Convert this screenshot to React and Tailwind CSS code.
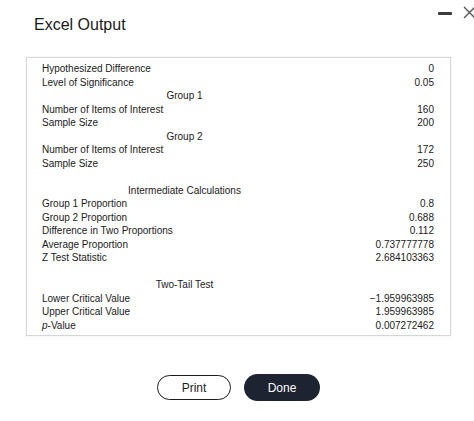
import React from "react";

const sections = [
  { type: "row", label: "Hypothesized Difference", value: "0" },
  { type: "row", label: "Level of Significance", value: "0.05" },
  { type: "head", label: "Group 1" },
  { type: "row", label: "Number of Items of Interest", value: "160" },
  { type: "row", label: "Sample Size", value: "200" },
  { type: "head", label: "Group 2" },
  { type: "row", label: "Number of Items of Interest", value: "172" },
  { type: "row", label: "Sample Size", value: "250" },
  { type: "blank" },
  { type: "head", label: "Intermediate Calculations" },
  { type: "row", label: "Group 1 Proportion", value: "0.8" },
  { type: "row", label: "Group 2 Proportion", value: "0.688" },
  { type: "row", label: "Difference in Two Proportions", value: "0.112" },
  { type: "row", label: "Average Proportion", value: "0.737777778" },
  { type: "row", label: "Z Test Statistic", value: "2.684103363" },
  { type: "blank" },
  { type: "head", label: "Two-Tail Test" },
  { type: "row", label: "Lower Critical Value", value: "−1.959963985" },
  { type: "row", label: "Upper Critical Value", value: "1.959963985" },
  { type: "row", label: "p-Value", value: "0.007272462", italicP: true },
];

export default function App() {
  return (
    <div
      className="relative w-[474px] h-[421px] bg-white text-[#1a1a1a] overflow-hidden"
      style={{ fontFamily: '"Liberation Sans", Arial, sans-serif' }}
    >
      {/* window controls */}
      <div className="absolute top-[12px] left-[438px] w-[14px] h-[3px] rounded-[1px] bg-[#3a3a3a]" />
      <svg
        className="absolute top-[6px] left-[463px]"
        width="13"
        height="13"
        viewBox="0 0 13 13"
      >
        <path d="M1 1 L12 12 M12 1 L1 12" stroke="#555" strokeWidth="1.3" fill="none" />
      </svg>

      <h1 className="pl-[34px] pt-[15px] text-[16px] leading-[20px] font-normal">
        Excel Output
      </h1>

      <div className="ml-[26px] mt-[22px] w-[425px] border border-[#d6d6d6] shadow-[0_0_1px_rgba(0,0,0,0.15)] pl-[15px] pr-[16px] pt-[4px] pb-[3px]">
        <div className="grid grid-cols-[285px_1fr] text-[10px] leading-[13.5px]">
          {sections.map((s, i) =>
            s.type === "head" ? (
              <React.Fragment key={i}>
                <div className="text-center">{s.label}</div>
                <div />
              </React.Fragment>
            ) : s.type === "blank" ? (
              <React.Fragment key={i}>
                <div className="h-[13.5px]" />
                <div />
              </React.Fragment>
            ) : (
              <React.Fragment key={i}>
                <div>
                  {s.italicP ? (
                    <>
                      <span className="italic">p</span>-Value
                    </>
                  ) : (
                    s.label
                  )}
                </div>
                <div className="text-right">{s.value}</div>
              </React.Fragment>
            )
          )}
        </div>
      </div>

      <div className="flex items-center justify-center gap-[13px] mt-[38px] pl-[3px]">
        <button className="w-[74px] h-[25px] rounded-full border-[1.5px] border-[#1c1c1c] bg-white text-[12px] text-[#1f1f1f]">
          Print
        </button>
        <button className="w-[76px] h-[27px] rounded-full bg-[#1d2330] text-[12px] text-white">
          Done
        </button>
      </div>
    </div>
  );
}
